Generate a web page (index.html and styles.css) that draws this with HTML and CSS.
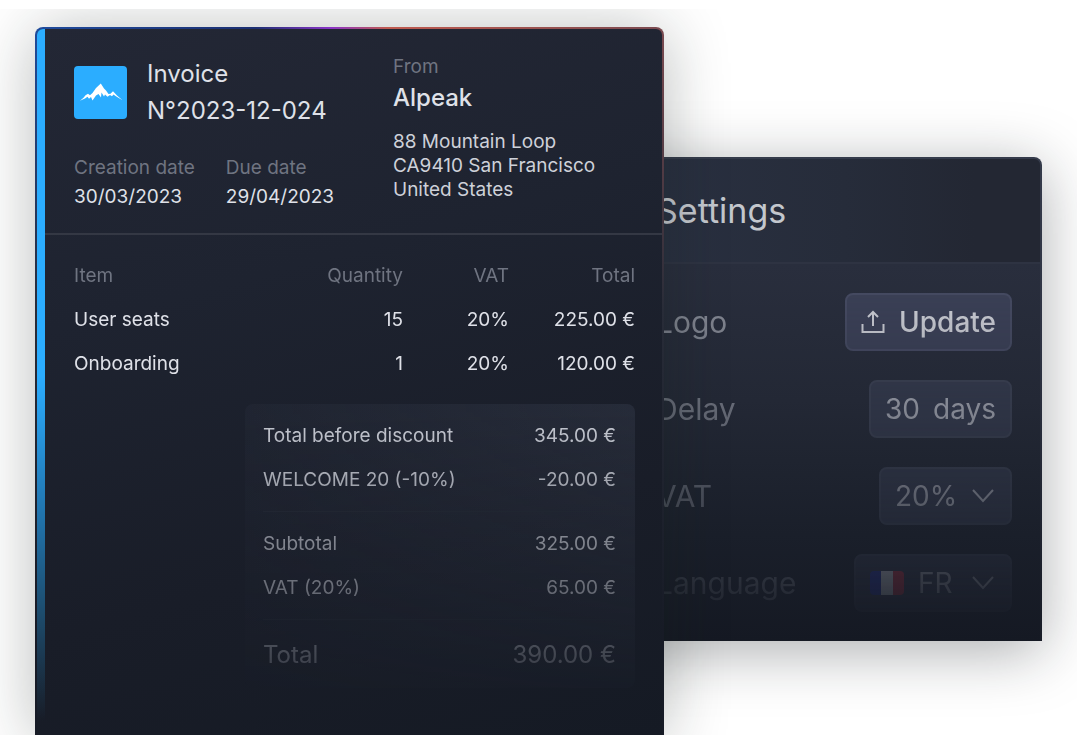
FILE: index.html
```html
<!DOCTYPE html>
<html lang="en">
<head>
    <meta charset="UTF-8">
    <meta name="viewport" content="width=device-width, initial-scale=1.0">
    <title>Invoice</title>
    <link rel="stylesheet" href="styles.css">
</head>
<body>
    <main class="stage">
        <article class="invoice">
            <header class="invoice-header">
                <div class="invoice-info">
                    <div class="brand">
                        <svg class="logo" viewBox="0 0 53 53" aria-hidden="true">
                            <rect width="53" height="53" rx="4" fill="#2badff"/>
                            <path fill="#fff" d="M6 34.8 L9.5 31.8 L11.5 29.2 L14 27.8 L16 29.3 L18.5 27 L22 22 L26.8 17.5 L30 22.5 L32 24.5 L34.5 28 L36.5 27.7 L39 25.3 L43 29.5 L48.5 34.2 L41.5 30 L39.5 28.6 L38 30.3 L36 29 L33.5 30.7 L31 28.4 L30 30.5 L27.5 26.5 L27 31.5 L24.5 28 L22 29.5 L18.5 34.4 L17 31 L15 32.8 L13.5 30.8 L11 32.5 Z"/>
                        </svg>
                        <h1 class="invoice-title">Invoice<br>N°2023-12-024</h1>
                    </div>
                    <dl class="dates">
                        <div>
                            <dt>Creation date</dt>
                            <dd>30/03/2023</dd>
                        </div>
                        <div>
                            <dt>Due date</dt>
                            <dd>29/04/2023</dd>
                        </div>
                    </dl>
                </div>
                <div class="sender">
                    <p class="sender-label">From</p>
                    <h2 class="sender-name">Alpeak</h2>
                    <address>88 Mountain Loop<br>CA9410 San Francisco<br>United States</address>
                </div>
            </header>

            <div class="invoice-body">
                <table class="items">
                    <thead>
                        <tr>
                            <th>Item</th>
                            <th class="col-quantity">Quantity</th>
                            <th class="col-vat">VAT</th>
                            <th class="col-total">Total</th>
                        </tr>
                    </thead>
                    <tbody>
                        <tr>
                            <td>User seats</td>
                            <td>15</td>
                            <td>20%</td>
                            <td>225.00 €</td>
                        </tr>
                        <tr>
                            <td>Onboarding</td>
                            <td>1</td>
                            <td>20%</td>
                            <td>120.00 €</td>
                        </tr>
                    </tbody>
                </table>

                <div class="totals">
                    <dl class="totals-group">
                        <div><dt>Total before discount</dt><dd>345.00 €</dd></div>
                        <div><dt>WELCOME 20 (-10%)</dt><dd>-20.00 €</dd></div>
                    </dl>
                    <dl class="totals-group">
                        <div><dt>Subtotal</dt><dd>325.00 €</dd></div>
                        <div><dt>VAT (20%)</dt><dd>65.00 €</dd></div>
                    </dl>
                    <dl class="totals-group grand-total">
                        <div><dt>Total</dt><dd>390.00 €</dd></div>
                    </dl>
                </div>
            </div>
        </article>

        <section class="settings">
            <h2 class="settings-header">Settings</h2>
            <form class="settings-body">
                <div class="setting">
                    <label for="logo">Logo</label>
                    <button type="button" id="logo" class="control update">
                        <svg class="upload" viewBox="0 0 24 24" aria-hidden="true">
                            <path d="M1.5 14v8h21v-8M12 16V2M7 7l5-5 5 5"/>
                        </svg>
                        Update
                    </button>
                </div>
                <div class="setting">
                    <label for="delay">Delay</label>
                    <div class="control delay">
                        <input type="text" id="delay" value="30">
                        <span>days</span>
                    </div>
                </div>
                <div class="setting">
                    <label for="vat">VAT</label>
                    <div class="control">
                        <select id="vat" class="vat-select">
                            <option>20%</option>
                        </select>
                        <svg class="chevron" viewBox="0 0 22 14" aria-hidden="true"><path d="M1 1l10 11L21 1"/></svg>
                    </div>
                </div>
                <div class="setting">
                    <label for="language">Language</label>
                    <div class="control language">
                        <svg class="flag" viewBox="0 0 34 24" aria-hidden="true">
                            <rect width="20" height="24" rx="4" fill="#2433b5"/>
                            <rect x="14" width="20" height="24" rx="4" fill="#d63346"/>
                            <rect x="11" width="12" height="24" fill="#e4e8ee"/>
                        </svg>
                        <select id="language" class="language-select">
                            <option>FR</option>
                        </select>
                        <svg class="chevron" viewBox="0 0 22 14" aria-hidden="true"><path d="M1 1l10 11L21 1"/></svg>
                    </div>
                </div>
            </form>
        </section>
    </main>
</body>
</html>
```
FILE: styles.css
```css
* {
    box-sizing: border-box;
}

body {
    margin: 0;
    background-color: #fff;
    font-family: Inter, "Liberation Sans", sans-serif;
    font-size: 19px;
    line-height: 24px;
}

h1, h2, p, dl, dd {
    margin: 0;
    font-weight: 400;
}

.stage {
    display: grid;
    grid-template-columns: 629fr 378fr;
    align-items: start;
    margin: 9px 6px 1px 0;
    padding: 18px 35px 0;
    overflow: hidden;
}

/* Invoice */
.invoice {
    position: relative;
    z-index: 1;
    padding-left: 8px;
    border: 2px solid transparent;
    border-bottom: 0;
    border-radius: 8px 8px 0 0;
    color: #dfe1e8;
    background:
        linear-gradient(#2badff 49%, #2176b0 68%, #1d4e70 82%, rgba(24, 28, 39, 0) 98%) 0 0 / 8px 100% no-repeat padding-box,
        linear-gradient(165deg, #232735 0%, #1e2330 35%, #191d28 70%, #151a24 100%) padding-box,
        linear-gradient(rgba(36, 40, 52, 0) 0%, #282c38 40%, #171b26 85%) border-box,
        linear-gradient(90deg, #1f4b9c 0%, #1c2f72 35%, #8a34c8 47%, #c05a50 56%, #7a4a50 100%) border-box;
    box-shadow: 0 4px 64px rgba(20, 30, 28, 0.3);
}

.invoice-header {
    display: grid;
    grid-template-columns: 319fr 242fr;
    padding: 26px 27px 22px 29px;
    border-bottom: 2px solid #343844;
}

.brand {
    display: flex;
    align-items: center;
    gap: 20px;
}

.logo {
    width: 53px;
    height: 53px;
}

.invoice-title {
    font-size: 24px;
    line-height: 37px;
}

.dates {
    display: flex;
    gap: 31px;
    margin-top: 24px;
    line-height: 29px;
}

.dates dt,
.sender-label,
.items th {
    color: #6f7481;
}

.sender-name {
    margin-bottom: 13px;
    font-size: 24px;
    font-weight: 500;
    line-height: 38px;
}

address {
    font-style: normal;
    color: #ced1d9;
}

.invoice-body {
    padding: 19px 27px 47px 29px;
    -webkit-mask-image: linear-gradient(#000 35%, transparent 100%);
    mask-image: linear-gradient(#000 35%, transparent 100%);
}

.items {
    width: 100%;
    border-collapse: collapse;
    table-layout: fixed;
}

.items th,
.items td {
    height: 44px;
    padding: 0;
    font-weight: 400;
    text-align: right;
}

.items th:first-child,
.items td:first-child {
    text-align: left;
}

.items .col-quantity {
    width: 160px;
}

.items .col-vat {
    width: 106px;
}

.items .col-total {
    width: 126px;
}

.totals {
    width: 390px;
    margin: 18px 0 0 auto;
    padding: 10px 19px 10px 18px;
    border-radius: 8px;
    color: #c9ccd5;
    background: linear-gradient(80deg, rgba(60, 67, 84, 0.1), rgba(60, 67, 84, 0.36));
}

.totals-group {
    padding-bottom: 9px;
    border-bottom: 1px solid #252a36;
    margin-bottom: 10px;
}

.totals-group div {
    display: flex;
    justify-content: space-between;
    line-height: 44px;
}

.grand-total {
    margin: 0;
    padding: 3px 0 1px;
    border: 0;
    font-size: 24px;
}

/* Settings */
.settings {
    margin: 130px 0 0 -60px;
    border: 2px solid transparent;
    border-bottom: 0;
    border-radius: 8px 8px 0 0;
    background:
        linear-gradient(#292e3d 22%, #232835 50%, #1a1f2a 78%, #151923 100%) padding-box,
        linear-gradient(#353b4b, #2d3242 40%, #1a1e29 90%) border-box;
    box-shadow: 0 10px 60px rgba(20, 24, 30, 0.36);
}

.settings-header {
    padding: 31px 50px 30px;
    border-bottom: 2px solid #2e3342;
    border-radius: 6px 6px 0 0;
    font-size: 34px;
    line-height: 42px;
    color: #c3c7cd;
    background: linear-gradient(90deg, #2a3142, #262c3a 55%, #232733 85%);
}

.settings-body {
    display: grid;
    gap: 29px;
    padding: 29px 28px 29px 50px;
    font-size: 30px;
    -webkit-mask-image: linear-gradient(#000 8%, transparent 100%);
    mask-image: linear-gradient(#000 8%, transparent 100%);
}

.setting {
    display: flex;
    align-items: center;
    justify-content: space-between;
    color: #858994;
}

.control {
    position: relative;
    display: flex;
    align-items: center;
    height: 58px;
    padding: 0 14px;
    border: 2px solid #3c4254;
    border-radius: 8px;
    background: #343a4d;
    color: #b3b6c0;
    font: inherit;
    font-size: 28px;
}

.control input,
.control select {
    padding: 0;
    border: 0;
    background: none;
    color: inherit;
    font: inherit;
    appearance: none;
}

.update {
    gap: 14px;
    border-color: #444960;
    background: #3a3f55;
    color: #c9cbd2;
    font-weight: 500;
}

.delay {
    gap: 12px;
}

.delay input {
    width: 36px;
}

.control .vat-select {
    width: 101px;
}

.control .language-select {
    width: 78px;
}

.language {
    gap: 14px;
}

.upload {
    width: 24px;
    height: 24px;
}

.flag {
    width: 34px;
    height: 24px;
}

/* sits over the select, which keeps the click */
.chevron {
    position: absolute;
    right: 16px;
    width: 22px;
    height: 14px;
    pointer-events: none;
}

.upload path,
.chevron path {
    fill: none;
    stroke: currentColor;
    stroke-width: 2;
}
```
